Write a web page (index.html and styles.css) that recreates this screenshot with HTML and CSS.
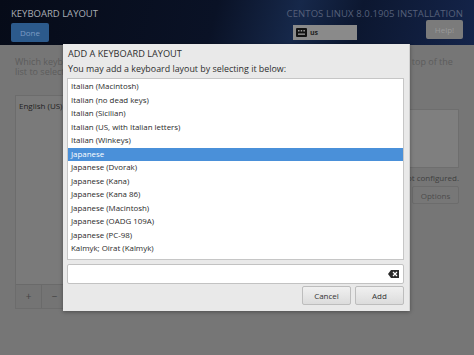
FILE: index.html
```html
<!DOCTYPE html>
<html lang="en">
<head>
  <meta charset="UTF-8" />
  <title>Keyboard Layout</title>
  <link rel="stylesheet" href="styles.css">
</head>
<body>
  <div class="screen">
    <div class="topbar">
      <div class="topbar-left">
        <div class="spoke-title">KEYBOARD LAYOUT</div>
        <button class="btn-done">Done</button>
      </div>
      <div class="topbar-right">
        <div class="product-title">CENTOS LINUX 8.0.1905 INSTALLATION</div>
        <div class="topbar-row">
          <div class="kb-indicator">
            <svg class="kb-icon" width="11" height="9" viewBox="0 0 11 9">
              <rect x="0" y="0" width="11" height="9" rx="1" fill="#111"/>
              <rect x="2" y="2" width="1.5" height="1.5" fill="#999"/>
              <rect x="4.7" y="2" width="1.5" height="1.5" fill="#999"/>
              <rect x="7.4" y="2" width="1.5" height="1.5" fill="#999"/>
              <rect x="2" y="5.5" width="7" height="1.3" fill="#999"/>
            </svg>
            <span>us</span>
          </div>
          <button class="btn-help">Help!</button>
        </div>
      </div>
    </div>

    <div class="content">
      <p class="intro">Which keyboard layouts would you like to use on this system? You may move any layout to the top of the<br>list to select it as the default.</p>
      <div class="columns">
        <div class="layout-panel">
          <div class="layout-list">
            <div class="layout-row">English (US)</div>
          </div>
          <div class="layout-toolbar">
            <span class="tool-btn">+</span>
            <span class="tool-btn">&minus;</span>
            <span class="tool-btn"></span>
            <span class="tool-btn"></span>
          </div>
        </div>
        <div class="side">
          <div class="preview"></div>
          <div class="switch-note">Layout switching not configured.</div>
          <button class="btn-options">Options</button>
        </div>
      </div>
    </div>

    <div class="dialog">
      <div class="dialog-title">ADD A KEYBOARD LAYOUT</div>
      <div class="dialog-sub">You may add a keyboard layout by selecting it below:</div>
      <div class="choice-list">
        <div class="choice">Italian (Macintosh)</div>
        <div class="choice">Italian (no dead keys)</div>
        <div class="choice">Italian (Sicilian)</div>
        <div class="choice">Italian (US, with Italian letters)</div>
        <div class="choice">Italian (Winkeys)</div>
        <div class="choice selected">Japanese</div>
        <div class="choice">Japanese (Dvorak)</div>
        <div class="choice">Japanese (Kana)</div>
        <div class="choice">Japanese (Kana 86)</div>
        <div class="choice">Japanese (Macintosh)</div>
        <div class="choice">Japanese (OADG 109A)</div>
        <div class="choice">Japanese (PC-98)</div>
        <div class="choice">Kalmyk; Oirat (Kalmyk)</div>
      </div>
      <div class="search">
        <svg class="clear-icon" width="11" height="8" viewBox="0 0 11 8">
          <path d="M3 0 H11 V8 H3 L0 4 Z" fill="#2a2a2a"/>
          <path d="M5 2 L9 6 M9 2 L5 6" stroke="#fff" stroke-width="1.2"/>
        </svg>
      </div>
      <div class="dialog-actions">
        <button class="btn-dlg">Cancel</button>
        <button class="btn-dlg">Add</button>
      </div>
    </div>
  </div>
</body>
</html>
```

FILE: styles.css
```css
body {
  margin: 0;
  font-family: 'Open Sans', 'Liberation Sans', sans-serif;
  background: #767676;
}
.screen {
  position: relative;
  width: 474px;
  height: 355px;
  overflow: hidden;
  background: #767676;
}
button {
  font-family: inherit;
  cursor: pointer;
}

/* top bar */
.topbar {
  height: 45px;
  display: flex;
  justify-content: space-between;
  background: linear-gradient(105deg, #060b18 0%, #0a1226 45%, #16284a 62%, #0c1730 75%, #14244a 100%);
}
.topbar-left {
  padding: 8px 0 0 11px;
}
.spoke-title {
  font-size: 9.5px;
  color: #a9adb5;
  line-height: 11px;
}
.btn-done {
  margin-top: 1px;
  width: 38px;
  height: 19px;
  border: none;
  border-radius: 2px;
  background: #2c5a8c;
  color: #7d9cc4;
  font-size: 8px;
  padding: 0;
}
.topbar-right {
  padding: 8px 11px 0 0;
  display: flex;
  flex-direction: column;
  align-items: flex-end;
}
.product-title {
  font-size: 9.5px;
  line-height: 11px;
  color: #56607a;
  letter-spacing: 0.1px;
}
.topbar-row {
  display: flex;
  align-items: flex-start;
  margin-top: 1px;
}
.kb-indicator {
  margin-top: 5px;
  margin-right: 69px;
  width: 64px;
  height: 15px;
  background: #8a8a8a;
  display: flex;
  align-items: center;
  padding-left: 3px;
  box-sizing: border-box;
  font-size: 7px;
  font-weight: bold;
  color: #222;
}
.kb-icon {
  margin-right: 3px;
}
.btn-help {
  width: 37px;
  height: 19px;
  border: none;
  border-radius: 2px;
  background: #7b7b7b;
  color: #999;
  font-size: 8px;
  padding: 0;
}

/* main content under the dialog */
.content {
  padding: 0 15px;
}
.intro {
  margin: 12px 0 0;
  font-size: 9px;
  line-height: 10px;
  color: #5c5c5c;
  white-space: nowrap;
}
.columns {
  display: flex;
  justify-content: space-between;
  margin-top: 18px;
}
.layout-panel {
  width: 212px;
  height: 214px;
  display: flex;
  flex-direction: column;
  border: 1px solid #6c6c6c;
  box-sizing: border-box;
  background: #7a7a7a;
}
.layout-list {
  flex: 1;
}
.layout-row {
  padding: 4px 3px;
  font-size: 8px;
  color: #222;
}
.layout-toolbar {
  height: 23px;
  display: flex;
  border-top: 1px solid #6a6a6a;
  background: #747474;
}
.tool-btn {
  width: 25px;
  border-right: 1px solid #6a6a6a;
  text-align: center;
  line-height: 22px;
  font-size: 10px;
  color: #444;
}
.side {
  width: 220px;
  display: flex;
  flex-direction: column;
  align-items: flex-end;
  padding-top: 14px;
}
.preview {
  width: 100%;
  height: 59px;
  background: #7f7f7f;
  border: 1px solid #6e6e6e;
  box-sizing: border-box;
}
.switch-note {
  margin-top: 4px;
  font-size: 8px;
  line-height: 11px;
  color: #404040;
}
.btn-options {
  margin-top: 3px;
  width: 47px;
  height: 18px;
  border: 1px solid #6c6c6c;
  border-radius: 2px;
  background: #777;
  color: #4c4c4c;
  font-size: 8px;
  padding: 0;
}

/* dialog */
.dialog {
  position: absolute;
  left: 63px;
  top: 44px;
  width: 347px;
  height: 267px;
  box-sizing: border-box;
  padding: 4px 5px 0 4px;
  background: #e9e9e9;
  border-right: 1px solid #d0d0d0;
  box-shadow: 0 1px 4px rgba(0,0,0,0.35);
}
.dialog-title {
  margin-left: 1px;
  font-size: 9.2px;
  line-height: 11px;
  color: #2e2e2e;
}
.dialog-sub {
  margin: 4px 0 0 1px;
  font-size: 8.9px;
  line-height: 11px;
  color: #2e2e2e;
}
.choice-list {
  margin-top: 4px;
  height: 182px;
  background: #fff;
  border: 1px solid #c6c6c6;
  box-sizing: border-box;
  padding-top: 1px;
}
.choice {
  height: 13.5px;
  line-height: 13.5px;
  padding-left: 3px;
  font-size: 7.9px;
  color: #2a2a2a;
}
.choice.selected {
  background: #4a90d9;
  color: #fff;
}
.search {
  margin-top: 4px;
  height: 20px;
  background: #fff;
  border: 1px solid #c2c2c2;
  border-radius: 2px;
  box-sizing: border-box;
  display: flex;
  justify-content: flex-end;
  align-items: center;
  padding-right: 4px;
}
.dialog-actions {
  margin-top: 2px;
  display: flex;
  justify-content: flex-end;
  gap: 4px;
}
.btn-dlg {
  width: 49px;
  height: 19px;
  border: 1px solid #bdbdbd;
  border-radius: 2px;
  background: linear-gradient(#f0f0f0, #dcdcdc);
  color: #333;
  font-size: 8px;
  padding: 0;
}
```
